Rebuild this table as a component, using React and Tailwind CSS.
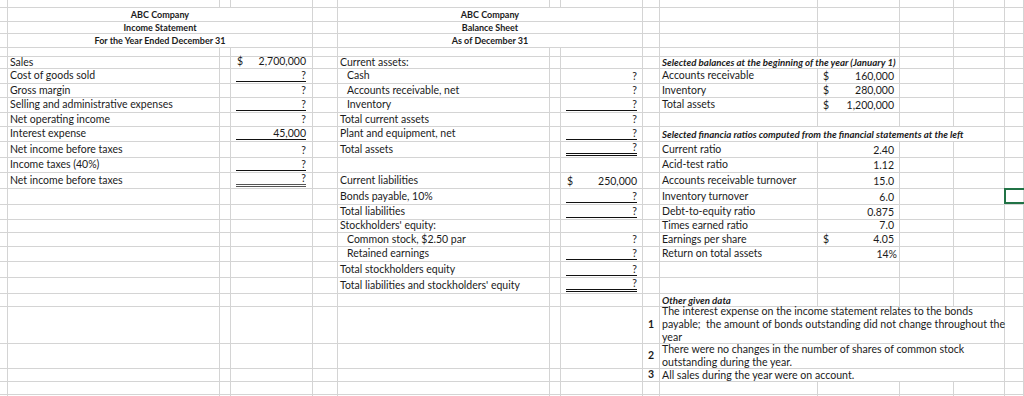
import React from "react";

// one spreadsheet row = list of [startColumn, cell]
const lab = (text, indent = false) => ({ type: "label", text, indent });
const amt = (side, value, opts = {}) => ({ type: "amount", side, value, ...opts });
const hd = (text, span) => ({ type: "heading", text, span });
const title = (text) => ({ type: "title", text, span: 3 });

const rows = {
  1: [[1, title("ABC Company")], [5, title("ABC Company")]],
  2: [[1, title("Income Statement")], [5, title("Balance Sheet")]],
  3: [[1, title("For the Year Ended December 31")], [5, title("As of December 31")]],
  5: [
    [1, lab("Sales")],
    [3, amt("is", "2,700,000", { dollar: true })],
    [5, lab("Current assets:")],
    [9, hd("Selected balances at the beginning of the year (January 1)", 2)],
  ],
  6: [
    [1, lab("Cost of goods sold")],
    [3, amt("is", "?", { ul: "single" })],
    [5, lab("Cash", true)],
    [7, amt("bs", "?")],
    [9, lab("Accounts receivable")],
    [10, amt("rt", "160,000", { dollar: true })],
  ],
  7: [
    [1, lab("Gross margin")],
    [3, amt("is", "?")],
    [5, lab("Accounts receivable, net", true)],
    [7, amt("bs", "?")],
    [9, lab("Inventory")],
    [10, amt("rt", "280,000", { dollar: true })],
  ],
  8: [
    [1, lab("Selling and administrative expenses")],
    [3, amt("is", "?", { ul: "single" })],
    [5, lab("Inventory", true)],
    [7, amt("bs", "?", { ul: "single" })],
    [9, lab("Total assets")],
    [10, amt("rt", "1,200,000", { dollar: true })],
  ],
  9: [
    [1, lab("Net operating income")],
    [3, amt("is", "?")],
    [5, lab("Total current assets")],
    [7, amt("bs", "?")],
  ],
  10: [
    [1, lab("Interest expense")],
    [3, amt("is", "45,000", { ul: "single" })],
    [5, lab("Plant and equipment, net")],
    [7, amt("bs", "?", { ul: "single" })],
    [9, hd("Selected financia ratios computed from the financial statements at the left", 4)],
  ],
  11: [
    [1, lab("Net income before taxes")],
    [3, amt("is", "?")],
    [5, lab("Total assets")],
    [7, amt("bs", "?", { ul: "double" })],
    [9, lab("Current ratio")],
    [10, amt("rt", "2.40")],
  ],
  12: [
    [1, lab("Income taxes (40%)")],
    [3, amt("is", "?", { ul: "single" })],
    [9, lab("Acid-test ratio")],
    [10, amt("rt", "1.12")],
  ],
  13: [
    [1, lab("Net income before taxes")],
    [3, amt("is", "?", { ul: "gray" })],
    [5, lab("Current liabilities")],
    [7, amt("bs", "250,000", { dollar: true })],
    [9, lab("Accounts receivable turnover")],
    [10, amt("rt", "15.0")],
  ],
  14: [
    [5, lab("Bonds payable, 10%")],
    [7, amt("bs", "?", { ul: "single" })],
    [9, lab("Inventory turnover")],
    [10, amt("rt", "6.0")],
    [13, { type: "selected" }],
  ],
  15: [
    [5, lab("Total liabilities")],
    [7, amt("bs", "?", { ul: "single" })],
    [9, lab("Debt-to-equity ratio")],
    [10, amt("rt", "0.875")],
  ],
  16: [
    [5, lab("Stockholders' equity:")],
    [9, lab("Times earned ratio")],
    [10, amt("rt", "7.0")],
  ],
  17: [
    [5, lab("Common stock, $2.50 par", true)],
    [7, amt("bs", "?")],
    [9, lab("Earnings per share")],
    [10, amt("rt", "4.05", { dollar: true })],
  ],
  18: [
    [5, lab("Retained earnings", true)],
    [7, amt("bs", "?", { ul: "single" })],
    [9, lab("Return on total assets")],
    [10, amt("rt", "14%", { pct: true })],
  ],
  19: [
    [5, lab("Total stockholders equity")],
    [7, amt("bs", "?", { ul: "single" })],
  ],
  20: [
    [5, lab("Total liabilities and stockholders' equity")],
    [7, amt("bs", "?", { ul: "double" })],
  ],
  21: [[9, hd("Other given data", 1)]],
  22: [
    [8, { type: "num", text: "1" }],
    [
      9,
      {
        type: "note",
        span: 4,
        lift: true,
        lines: [
          "The interest expense on the income statement relates to the bonds",
          "payable;  the amount of bonds outstanding did not change throughout the",
          "year",
        ],
      },
    ],
  ],
  23: [
    [8, { type: "num", text: "2" }],
    [
      9,
      {
        type: "note",
        span: 4,
        lines: ["There were no changes in the number of shares of common stock", "outstanding during the year."],
      },
    ],
  ],
  24: [
    [8, { type: "num", text: "3" }],
    [9, { type: "note", span: 4, lines: ["All sales during the year were on account."] }],
  ],
};

const spanClass = { 1: "", 2: "col-span-2", 3: "col-span-3", 4: "col-span-4" };
const grid = "border-r border-b border-[#d4d4d4]";

const sidePad = {
  is: "pl-[5px] pr-[6px]",
  bs: "pl-[5px] pr-[5px]",
  rt: "pl-[4px] pr-[5px]",
};

const ulClass = {
  none: "",
  single: "border-b border-[#111]",
  double: "border-b-[3px] border-double border-[#111]",
  gray: "border-b-[3px] border-double border-[#555]",
};

function Cell({ cell }) {
  if (!cell) return <div className={grid} />;
  const span = spanClass[cell.span || 1];

  if (cell.type === "title") {
    return (
      <div className={`${span} ${grid} flex items-center justify-center font-bold text-[9px]`}>
        {cell.text}
      </div>
    );
  }

  if (cell.type === "label") {
    return (
      <div className={`${grid} flex items-center whitespace-nowrap ${cell.indent ? "pl-[9px]" : "pl-[2px]"}`}>
        {cell.text}
      </div>
    );
  }

  if (cell.type === "heading") {
    return (
      <div className={`${span} ${grid} flex items-center whitespace-nowrap pl-[2px] font-bold italic text-[9.7px]`}>
        {cell.text}
      </div>
    );
  }

  if (cell.type === "amount") {
    return (
      <div className={`${grid} flex flex-col justify-end pb-px ${sidePad[cell.side]}`}>
        <div className={`flex justify-between leading-[12px] ${ulClass[cell.ul || "none"]}`}>
          <span className="pl-px">{cell.dollar ? "$" : ""}</span>
          <span className={cell.pct ? "-mr-[3px]" : ""}>{cell.value}</span>
        </div>
      </div>
    );
  }

  if (cell.type === "num") {
    return <div className={`${grid} flex items-center justify-center font-bold`}>{cell.text}</div>;
  }

  if (cell.type === "note") {
    return (
      <div
        className={`${span} ${grid} flex flex-col justify-center pl-[2px] leading-[13px] whitespace-pre text-[10.6px] ${
          cell.lift ? "pb-[2px]" : ""
        }`}
      >
        {cell.lines.map((line, i) => (
          <span key={i}>{line}</span>
        ))}
      </div>
    );
  }

  if (cell.type === "selected") {
    return (
      <div className={`${grid} relative`}>
        <div className="absolute -left-px -top-px -right-[6px] bottom-0 border-2 border-[#217346]" />
      </div>
    );
  }

  return <div className={grid} />;
}

function SheetRow({ index }) {
  const defs = rows[index] || [];
  const out = [];
  let c = 0;
  while (c < 14) {
    const found = defs.find(([start]) => start === c);
    if (found) {
      out.push(<Cell key={c} cell={found[1]} />);
      c += found[1].span || 1;
    } else {
      out.push(<Cell key={c} />);
      c += 1;
    }
  }
  return out;
}

export default function App() {
  return (
    <div className="h-[396px] w-[1024px] overflow-hidden bg-white text-[#1b1b1b] font-['Lato','Liberation_Sans',sans-serif] text-[10.5px]">
      <div className="grid grid-cols-[8px_212px_11px_82px_25px_212px_11px_82px_17px_158px_82px_54px_51px_1fr] grid-rows-[8px_14px_12px_14px_9px_12px_15px_14px_15px_14px_15px_16px_15px_16px_16px_15px_13px_14px_15px_16px_16px_13px_37px_25px_13px_13px_13px]">
        {Array.from({ length: 27 }, (_, r) => (
          <SheetRow key={r} index={r} />
        ))}
      </div>
    </div>
  );
}
